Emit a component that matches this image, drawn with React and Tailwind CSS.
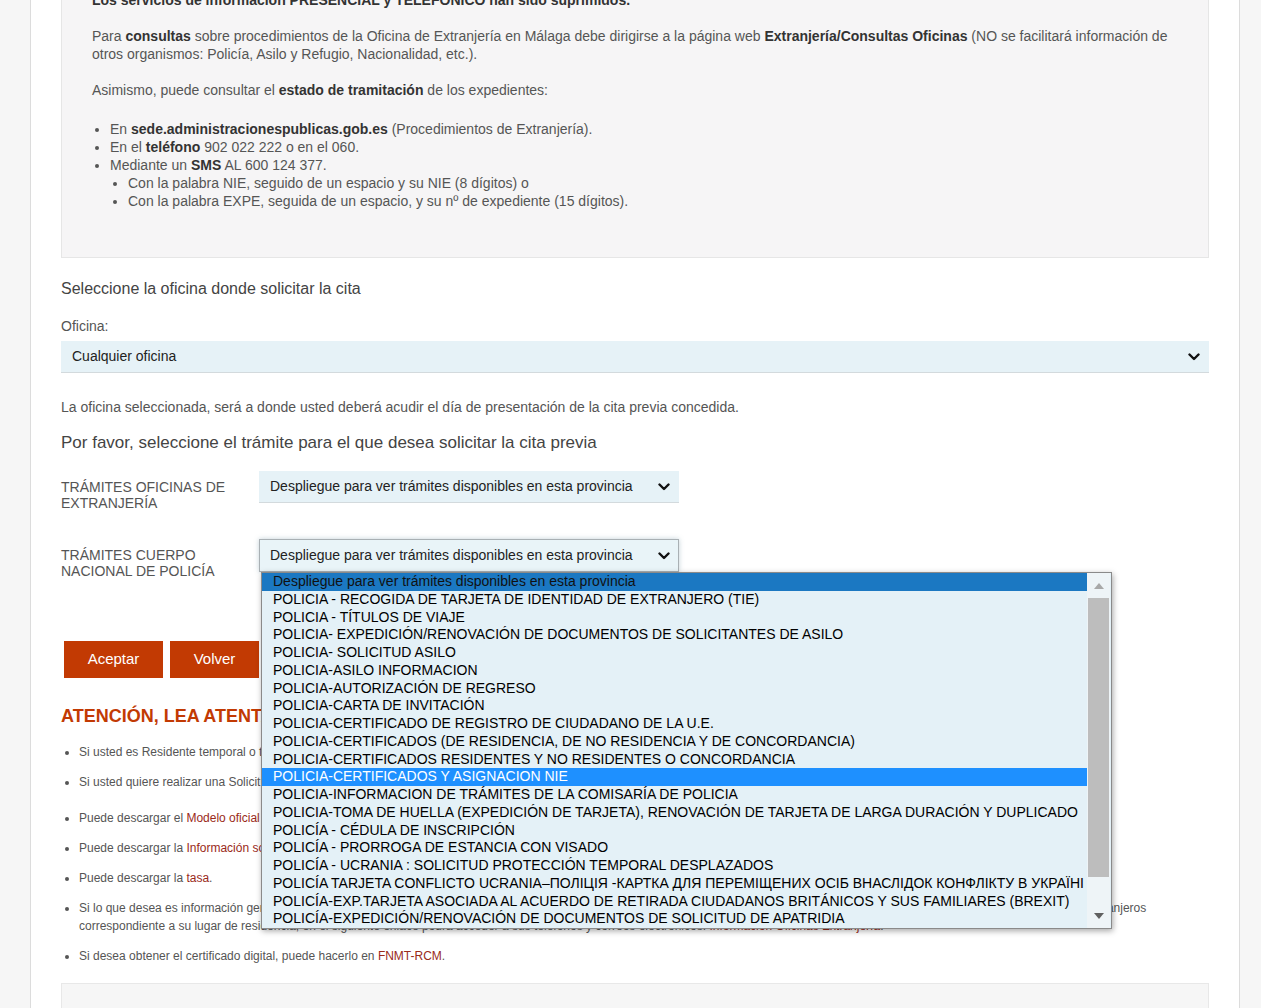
import React from "react";

const items = [
  "Despliegue para ver trámites disponibles en esta provincia",
  "POLICIA - RECOGIDA DE TARJETA DE IDENTIDAD DE EXTRANJERO (TIE)",
  "POLICIA - TÍTULOS DE VIAJE",
  "POLICIA- EXPEDICIÓN/RENOVACIÓN DE DOCUMENTOS DE SOLICITANTES DE ASILO",
  "POLICIA- SOLICITUD ASILO",
  "POLICIA-ASILO INFORMACION",
  "POLICIA-AUTORIZACIÓN DE REGRESO",
  "POLICIA-CARTA DE INVITACIÓN",
  "POLICIA-CERTIFICADO DE REGISTRO DE CIUDADANO DE LA U.E.",
  "POLICIA-CERTIFICADOS (DE RESIDENCIA, DE NO RESIDENCIA Y DE CONCORDANCIA)",
  "POLICIA-CERTIFICADOS RESIDENTES Y NO RESIDENTES O CONCORDANCIA",
  "POLICIA-CERTIFICADOS Y ASIGNACION NIE",
  "POLICIA-INFORMACION DE TRÁMITES DE LA COMISARÍA DE POLICIA",
  "POLICIA-TOMA DE HUELLA (EXPEDICIÓN DE TARJETA), RENOVACIÓN DE TARJETA DE LARGA DURACIÓN Y DUPLICADO",
  "POLICÍA - CÉDULA DE INSCRIPCIÓN",
  "POLICÍA - PRORROGA DE ESTANCIA CON VISADO",
  "POLICÍA - UCRANIA : SOLICITUD PROTECCIÓN TEMPORAL DESPLAZADOS",
  "POLICÍA TARJETA CONFLICTO UCRANIA–ПОЛІЦІЯ -КАРТКА ДЛЯ ПЕРЕМІЩЕНИХ ОСІБ ВНАСЛІДОК КОНФЛІКТУ В УКРАЇНІ",
  "POLICÍA-EXP.TARJETA ASOCIADA AL ACUERDO DE RETIRADA CIUDADANOS BRITÁNICOS Y SUS FAMILIARES (BREXIT)",
  "POLICÍA-EXPEDICIÓN/RENOVACIÓN DE DOCUMENTOS DE SOLICITUD DE APATRIDIA",
];

function Chevron() {
  return (
    <svg width="12" height="8" viewBox="0 0 12 8" className="shrink-0">
      <path d="M1.5 1.5 L6 6 L10.5 1.5" fill="none" stroke="#111" strokeWidth="2.4" strokeLinecap="round" strokeLinejoin="round" />
    </svg>
  );
}

function DropList() {
  return (
    <div className="absolute left-[2px] top-[33px] z-10 flex h-[357px] w-[851px] border border-[#8a8a8a] bg-[#e4f1f7] shadow-[1px_2px_6px_rgba(0,0,0,0.35)]">
      <div className="flex-1 text-[14px] leading-[17.75px] text-black">
        {items.map((t, i) => (
          <div
            key={i}
            className={
              i === 0
                ? "h-[17.75px] whitespace-nowrap bg-[#1b78c2] pl-[11px] text-[#111]"
                : i === 11
                ? "h-[17.75px] whitespace-nowrap bg-[#1e90ff] pl-[11px] text-white"
                : "h-[17.75px] whitespace-nowrap pl-[11px]"
            }
          >
            {t}
          </div>
        ))}
      </div>
      <div className="mr-[1px] flex w-[23px] flex-col bg-[#eef4f7]">
        <div className="flex h-[25px] items-center justify-center">
          <svg width="10" height="6" viewBox="0 0 10 6">
            <path d="M0 6 L5 0 L10 6 Z" fill="#a8a8a8" />
          </svg>
        </div>
        <div className="mx-[1px] h-[279px] bg-[#bdbdbd]" />
        <div className="flex-1" />
        <div className="flex h-[25px] items-center justify-center">
          <svg width="10" height="6" viewBox="0 0 10 6">
            <path d="M0 0 L10 0 L5 6 Z" fill="#606060" />
          </svg>
        </div>
      </div>
    </div>
  );
}

export default function App() {
  return (
    <div className="h-[1008px] overflow-hidden bg-[#f6f6f6] font-['Liberation_Sans',Arial,sans-serif]">
      <div className="ml-[30px] flex min-h-[1060px] w-[1210px] flex-col border-x border-[#dcdcdc] bg-white px-[30px]">
        {/* info box */}
        <div className="mt-[-29px] border border-[#e6e6e6] bg-[#f6f5f6] px-[30px] pb-[47px] pt-[19px] text-[14px] leading-[18px] text-[#555]">
          <p className="font-bold text-[#333]">
            Los servicios de información PRESENCIAL y TELEFÓNICO han sido suprimidos.
          </p>
          <p className="mt-[18px]">
            Para <b className="text-[#333]">consultas</b> sobre procedimientos de la Oficina de Extranjería en Málaga debe dirigirse a la página web{" "}
            <b className="text-[#333]">Extranjería/Consultas Oficinas</b> (NO se facilitará información de otros organismos: Policía, Asilo y Refugio, Nacionalidad, etc.).
          </p>
          <p className="mt-[18px]">
            Asimismo, puede consultar el <b className="text-[#333]">estado de tramitación</b> de los expedientes:
          </p>
          <ul className="mt-[21px] list-disc pl-[18px]">
            <li>
              En <b className="text-[#333]">sede.administracionespublicas.gob.es</b> (Procedimientos de Extranjería).
            </li>
            <li>
              En el <b className="text-[#333]">teléfono</b> 902 022 222 o en el 060.
            </li>
            <li>
              Mediante un <b className="text-[#333]">SMS</b> AL 600 124 377.
              <ul className="list-disc pl-[18px]">
                <li>Con la palabra NIE, seguido de un espacio y su NIE (8 dígitos) o</li>
                <li>Con la palabra EXPE, seguida de un espacio, y su nº de expediente (15 dígitos).</li>
              </ul>
            </li>
          </ul>
        </div>

        <h2 className="mt-[21px] text-[16px] leading-[20px] text-[#444]">Seleccione la oficina donde solicitar la cita</h2>
        <label className="mt-[18px] text-[14px] leading-[18px] text-[#555]">Oficina:</label>
        <div className="mt-[6px] flex h-[32px] items-center justify-between border-b border-[#d3dadd] bg-[#e6f2f7] pl-[11px] pr-[9px] text-[14px] text-[#222]">
          <span>Cualquier oficina</span>
          <Chevron />
        </div>
        <p className="mt-[25px] text-[14px] leading-[18px] text-[#555]">
          La oficina seleccionada, será a donde usted deberá acudir el día de presentación de la cita previa concedida.
        </p>
        <h2 className="mt-[17px] text-[17px] leading-[20px] text-[#444]">
          Por favor, seleccione el trámite para el que desea solicitar la cita previa
        </h2>

        <div className="mt-[18px] flex items-start">
          <div className="w-[198px] pt-[8px] text-[14px] leading-[16px] text-[#555]">
            TRÁMITES OFICINAS DE
            <br />
            EXTRANJERÍA
          </div>
          <div className="flex h-[32px] w-[420px] items-center justify-between border-b border-[#d3dadd] bg-[#e6f2f7] pl-[11px] pr-[9px] text-[14px] text-[#222]">
            <span>Despliegue para ver trámites disponibles en esta provincia</span>
            <Chevron />
          </div>
        </div>

        <div className="mt-[28px] flex items-start">
          <div className="w-[198px] pt-[8px] text-[14px] leading-[16px] text-[#555]">
            TRÁMITES CUERPO
            <br />
            NACIONAL DE POLICÍA
          </div>
          <div className="relative">
            <div className="flex h-[33px] w-[420px] items-center justify-between border border-[#a9b0b4] bg-[#e9f4f8] pl-[10px] pr-[8px] text-[14px] text-[#222] shadow-[0_0_5px_rgba(80,120,140,0.35)]">
              <span>Despliegue para ver trámites disponibles en esta provincia</span>
              <Chevron />
            </div>
            <DropList />
          </div>
        </div>

        <div className="ml-[3px] mt-[62px] flex gap-[7px]">
          <button className="h-[37px] w-[99px] bg-[#c23a03] text-[15px] text-white">Aceptar</button>
          <button className="h-[37px] w-[89px] bg-[#c23a03] text-[15px] text-white">Volver</button>
          <button className="h-[37px] w-[120px] bg-[#c23a03] text-[15px] text-white">Salir</button>
        </div>

        <h3 className="mt-[27px] text-[18px] font-bold leading-[22px] text-[#c23a03]">
          ATENCIÓN, LEA ATENTAMENTE:
        </h3>

        <ul className="mt-[16px] list-disc pl-[18px] text-[12px] leading-[18px] text-[#555]">
          <li className="mb-[12px]">
            Si usted es Residente temporal o tiene una autorización de estancia, consulte los requisitos antes de solicitar la cita.
          </li>
          <li className="mb-[18px]">
            Si usted quiere realizar una Solicitud de Protección Internacional, seleccione el trámite correspondiente.
          </li>
          <li className="mb-[12px]">
            Puede descargar el <span className="text-[#9a2a1a]">Modelo oficial de solicitud</span>.
          </li>
          <li className="mb-[12px]">
            Puede descargar la <span className="text-[#9a2a1a]">Información sobre los trámites</span>.
          </li>
          <li className="mb-[12px]">
            Puede descargar la <span className="text-[#9a2a1a]">tasa</span>.
          </li>
          <li className="mb-[12px]">
            Si lo que desea es información general sobre los procedimientos de extranjería o el estado de su expediente, le recomendamos asimismo que consulte la página web oficial de la Oficina de Extranjeros correspondiente a su lugar de residencia, en el siguiente enlace podrá acceder a sus teléfonos y correos electrónicos:{" "}
            <span className="text-[#9a2a1a]">Información Oficinas Extranjería</span>.
          </li>
          <li>
            Si desea obtener el certificado digital, puede hacerlo en <span className="text-[#9a2a1a]">FNMT-RCM</span>.
          </li>
        </ul>

        <div className="mt-[18px] h-[120px] border border-[#e8e8e8] bg-[#f6f6f6]" />
      </div>
    </div>
  );
}
